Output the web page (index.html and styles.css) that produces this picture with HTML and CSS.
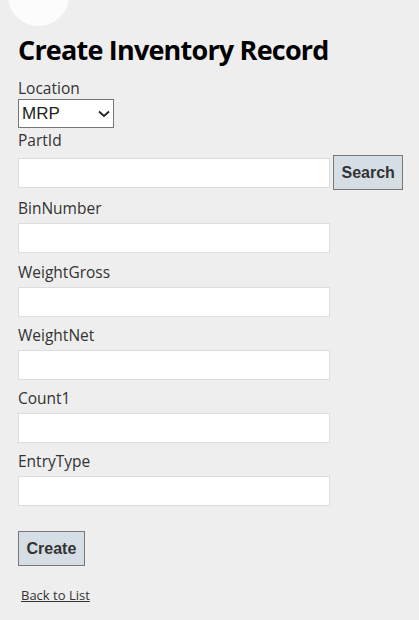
FILE: index.html
```html
<!DOCTYPE html>
<html>
<head>
<meta charset="utf-8">
<link rel="stylesheet" href="styles.css">
</head>
<body>
<div class="blob"></div>
<main class="page">
  <h1 class="title">Create Inventory Record</h1>
  <form class="form">
    <label class="loc-label" for="loc">Location</label>
    <span class="select-wrap">
      <select id="loc" class="select"><option>MRP</option></select>
      <svg class="chev" width="12" height="8" viewBox="0 0 12 8"><path d="M1 1.5 L6 6 L11 1.5" fill="none" stroke="#222" stroke-width="1.8"/></svg>
    </span>
    <label class="part-label" for="part">PartId</label>
    <div class="part-row">
      <input id="part" class="field" type="text">
      <button type="button" class="btn">Search</button>
    </div>
    <div class="group"><label class="lbl">BinNumber</label><input class="field" type="text"></div>
    <div class="group"><label class="lbl">WeightGross</label><input class="field" type="text"></div>
    <div class="group"><label class="lbl">WeightNet</label><input class="field" type="text"></div>
    <div class="group"><label class="lbl">Count1</label><input class="field" type="text"></div>
    <div class="group"><label class="lbl">EntryType</label><input class="field" type="text"></div>
    <button type="button" class="btn create">Create</button>
  </form>
  <a class="back" href="#">Back to List</a>
</main>
</body>
</html>
```
FILE: styles.css
```css
html, body {
  margin: 0;
  padding: 0;
  background: #eeeeee;
}
body {
  font-family: "Open Sans", "Noto Sans", sans-serif;
  color: #333;
  overflow: hidden;
}
.blob {
  position: absolute;
  left: 8px;
  top: -35px;
  width: 61px;
  height: 61px;
  border-radius: 50%;
  background: #fcfcfc;
  filter: blur(0.6px);
}
.page {
  padding: 0 18px;
}
.title {
  margin: 30px 0 8px;
  font-size: 27px;
  letter-spacing: -0.8px;
  line-height: 40px;
  font-weight: 700;
  color: #000;
}
.form {
  margin: 0;
}
.loc-label, .part-label, .lbl {
  display: block;
  font-size: 15.5px;
  color: #333;
}
.loc-label {
  line-height: 21px;
}
.select-wrap {
  position: relative;
  display: inline-block;
}
.select {
  -webkit-appearance: none;
  appearance: none;
  display: block;
  width: 96px;
  height: 29px;
  margin: 0;
  padding: 0 0 0 3px;
  border: 1px solid #767676;
  border-radius: 0;
  background: #fff;
  font-family: "Liberation Sans", Arial, sans-serif;
  font-size: 17px;
  color: #222;
}
.chev {
  position: absolute;
  right: 4px;
  top: 11px;
  pointer-events: none;
}
.part-label {
  line-height: 21px;
  margin-top: 2px;
}
.part-row {
  display: flex;
  align-items: center;
  gap: 3px;
  margin-top: 4px;
  height: 35px;
}
.part-row > * {
  flex-shrink: 0;
}
.field {
  box-sizing: border-box;
  display: block;
  width: 312px;
  height: 30px;
  margin: 0;
  padding: 0 6px;
  border: 1px solid #dddddd;
  border-radius: 0;
  background: #fff;
  font-size: 15px;
}
.btn {
  box-sizing: border-box;
  height: 35px;
  margin: 0;
  padding: 0 7.5px;
  border: 1px solid #777;
  border-radius: 0;
  background: #d5dee5;
  font-family: "Liberation Sans", Arial, sans-serif;
  font-weight: 700;
  font-size: 16px;
  color: #333;
}
.group {
  margin-top: 6.3px;
}
.lbl {
  line-height: 24px;
  margin-bottom: 3px;
}
.create {
  display: block;
  margin-top: 25px;
}
.back {
  display: inline-block;
  margin: 18.5px 0 0 3px;
  font-size: 13px;
  line-height: 20px;
  color: #333;
  text-decoration: underline;
}
```
